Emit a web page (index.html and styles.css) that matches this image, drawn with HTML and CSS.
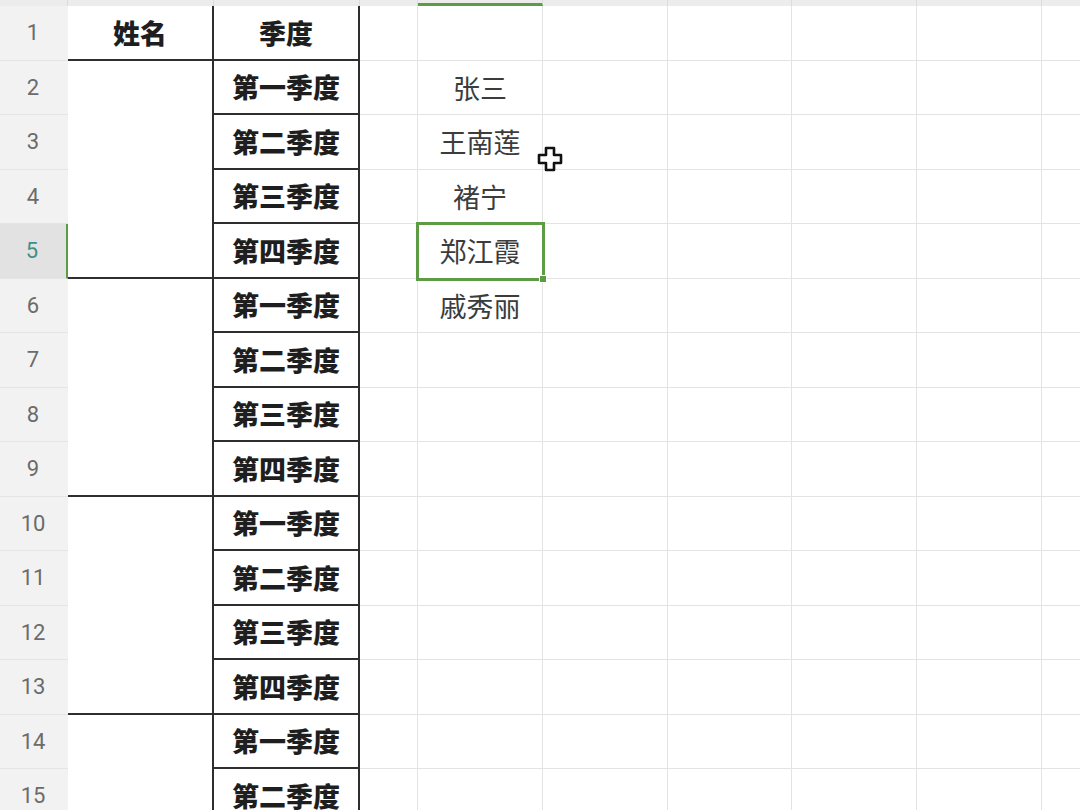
FILE: index.html
```html
<!DOCTYPE html>
<html lang="zh">
<head>
<meta charset="utf-8">
<title>表格</title>
<link rel="stylesheet" href="styles.css">
</head>
<body>
<div class="sheet">
  <!-- column header strip -->
  <div class="ch rhc"></div><div class="ch"></div><div class="ch"></div><div class="ch"></div><div class="ch active"></div><div class="ch"></div><div class="ch"></div><div class="ch"></div><div class="ch"></div><div class="ch"></div>

  <!-- row 1 -->
  <div class="rh">1</div>
  <div class="c t head">姓名</div>
  <div class="c t head">季度</div>
  <div class="c"></div><div class="c"></div><div class="c"></div><div class="c"></div><div class="c"></div><div class="c"></div><div class="c"></div>

  <!-- row 2 -->
  <div class="rh">2</div>
  <div class="c t merge m1"></div>
  <div class="c t">第一季度</div>
  <div class="c"></div><div class="c name">张三</div><div class="c"></div><div class="c"></div><div class="c"></div><div class="c"></div><div class="c"></div>

  <!-- row 3 -->
  <div class="rh">3</div>
  <div class="c t">第二季度</div>
  <div class="c"></div><div class="c name">王南莲</div><div class="c"></div><div class="c"></div><div class="c"></div><div class="c"></div><div class="c"></div>

  <!-- row 4 -->
  <div class="rh">4</div>
  <div class="c t">第三季度</div>
  <div class="c"></div><div class="c name">褚宁</div><div class="c"></div><div class="c"></div><div class="c"></div><div class="c"></div><div class="c"></div>

  <!-- row 5 -->
  <div class="rh sel">5</div>
  <div class="c t">第四季度</div>
  <div class="c"></div><div class="c name current">郑江霞</div><div class="c"></div><div class="c"></div><div class="c"></div><div class="c"></div><div class="c"></div>

  <!-- row 6 -->
  <div class="rh">6</div>
  <div class="c t merge m2"></div>
  <div class="c t">第一季度</div>
  <div class="c"></div><div class="c name">戚秀丽</div><div class="c"></div><div class="c"></div><div class="c"></div><div class="c"></div><div class="c"></div>

  <!-- row 7 -->
  <div class="rh">7</div>
  <div class="c t">第二季度</div>
  <div class="c"></div><div class="c"></div><div class="c"></div><div class="c"></div><div class="c"></div><div class="c"></div><div class="c"></div>

  <!-- row 8 -->
  <div class="rh">8</div>
  <div class="c t">第三季度</div>
  <div class="c"></div><div class="c"></div><div class="c"></div><div class="c"></div><div class="c"></div><div class="c"></div><div class="c"></div>

  <!-- row 9 -->
  <div class="rh">9</div>
  <div class="c t">第四季度</div>
  <div class="c"></div><div class="c"></div><div class="c"></div><div class="c"></div><div class="c"></div><div class="c"></div><div class="c"></div>

  <!-- row 10 -->
  <div class="rh">10</div>
  <div class="c t merge m3"></div>
  <div class="c t">第一季度</div>
  <div class="c"></div><div class="c"></div><div class="c"></div><div class="c"></div><div class="c"></div><div class="c"></div><div class="c"></div>

  <!-- row 11 -->
  <div class="rh">11</div>
  <div class="c t">第二季度</div>
  <div class="c"></div><div class="c"></div><div class="c"></div><div class="c"></div><div class="c"></div><div class="c"></div><div class="c"></div>

  <!-- row 12 -->
  <div class="rh">12</div>
  <div class="c t">第三季度</div>
  <div class="c"></div><div class="c"></div><div class="c"></div><div class="c"></div><div class="c"></div><div class="c"></div><div class="c"></div>

  <!-- row 13 -->
  <div class="rh">13</div>
  <div class="c t">第四季度</div>
  <div class="c"></div><div class="c"></div><div class="c"></div><div class="c"></div><div class="c"></div><div class="c"></div><div class="c"></div>

  <!-- row 14 -->
  <div class="rh">14</div>
  <div class="c t merge m4"></div>
  <div class="c t">第一季度</div>
  <div class="c"></div><div class="c"></div><div class="c"></div><div class="c"></div><div class="c"></div><div class="c"></div><div class="c"></div>

  <!-- row 15 -->
  <div class="rh">15</div>
  <div class="c t">第二季度</div>
  <div class="c"></div><div class="c"></div><div class="c"></div><div class="c"></div><div class="c"></div><div class="c"></div><div class="c"></div>

  <svg class="cursor" width="26" height="26" viewBox="0 0 26 26" aria-hidden="true">
    <path d="M9 2 H17 V9 H24 V17 H17 V24 H9 V17 H2 V9 H9 Z" fill="#fff" stroke="#111" stroke-width="2.6" stroke-linejoin="round"/>
  </svg>
</div>
</body>
</html>
```

FILE: styles.css
```css
html, body {
  margin: 0;
  padding: 0;
  background: #ffffff;
  overflow: hidden;
}

.sheet {
  position: relative;
  display: grid;
  grid-template-columns: 68px 146px 146px 58px 125px 125px 124px 125px 125px 125px;
  grid-template-rows: 6px repeat(15, 54.5px);
  width: 1080px;
  height: 810px;
  overflow: hidden;
  font-family: "Noto Sans CJK SC", "Noto Sans", sans-serif;
}

.ch {
  background: #ececec;
  border-right: 1px solid #dcdcdc;
  box-sizing: border-box;
}
.ch.active {
  background: #ececec;
  border-bottom: 3px solid #5d9b45;
}

.rh {
  background: #f2f2f3;
  border-bottom: 1px solid #e4e4e4;
  box-sizing: border-box;
  display: flex;
  align-items: center;
  justify-content: center;
  font-family: "Roboto", "Liberation Sans", sans-serif;
  font-size: 22px;
  color: #6b6b6b;
  padding-right: 2px;
}
.rh.sel {
  background: #e2e2e2;
  color: #3f9089;
  border-right: 2px solid #5d9b45;
}

.c {
  box-sizing: border-box;
  border-right: 1px solid #e3e3e3;
  border-bottom: 1px solid #e3e3e3;
  display: flex;
  align-items: center;
  justify-content: center;
}

.t {
  border-right: 2px solid #2e2e2e;
  border-bottom: 2px solid #2e2e2e;
  font-weight: 900;
  font-size: 27px;
  color: #1e1e1e;
}

.merge { grid-column: 2; }
.m1 { grid-row: 3 / span 4; }
.m2 { grid-row: 7 / span 4; }
.m3 { grid-row: 11 / span 4; }
.m4 { grid-row: 15 / span 2; }

.name {
  font-size: 27px;
  color: #3c3c3c;
  font-weight: 400;
}

.current {
  position: relative;
  outline: 3px solid #5d9b45;
  outline-offset: -1px;
}
.current::after {
  content: "";
  position: absolute;
  right: -5px;
  bottom: -5px;
  width: 6px;
  height: 6px;
  background: #5d9b45;
  border: 1px solid #fff;
}

.cursor {
  position: absolute;
  left: 537px;
  top: 146px;
}
```
